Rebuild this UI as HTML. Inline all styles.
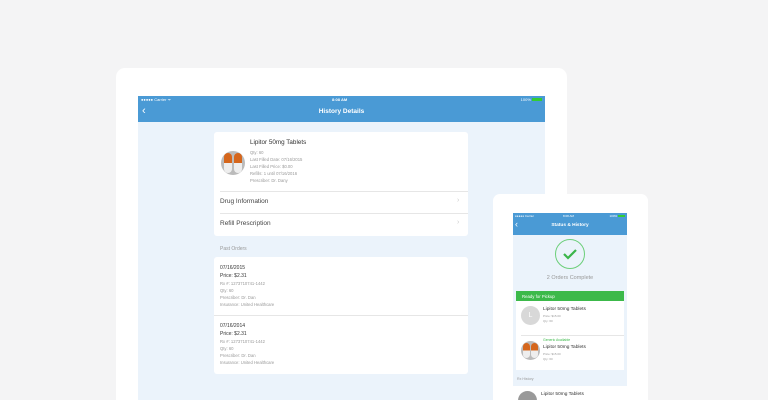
<!DOCTYPE html><html style="width:768px;height:400px;overflow:hidden"><head><style>
*{margin:0;padding:0;box-sizing:border-box}
body{width:768px;height:400px;background:#f4f4f5;position:relative;overflow:hidden;font-family:"Liberation Sans",sans-serif;color:#333}
.a{position:absolute}
.g{color:#999}
.pill{position:absolute;border-radius:50%;overflow:hidden;background:#bbb}
.pill i{position:absolute;top:8%;width:34%;height:84%;border-radius:5px;background:linear-gradient(#d5661c 50%,#eee 50%)}
</style></head><body>
<div class="a" style="left:116px;top:68px;width:451px;height:332px;background:#fff;border-radius:9px 9px 0 0"></div>
<div class="a" style="left:138px;top:96px;width:407px;height:304px;background:#ebf3fb"></div>
<div class="a" style="left:138px;top:96px;width:407px;height:26px;background:#4a9ad5;color:#fff">
 <div class="a" style="left:3px;top:1px;font-size:4px">●●●●● Carrier ᯤ</div>
 <div class="a" style="left:194px;top:1px;font-size:4px;font-weight:bold">8:08 AM</div>
 <div class="a" style="right:3px;top:1px;font-size:4px">100% <span style="display:inline-block;width:10px;height:3px;background:#3c3"></span></div>
 <div class="a" style="left:4px;top:9px;font-size:11px">‹</div>
 <div class="a" style="left:0;width:407px;top:12px;text-align:center;font-size:6.5px;font-weight:bold">History Details</div>
</div>
<div class="a" style="left:214px;top:132px;width:254px;height:104px;background:#fff;border-radius:3px">
 <div class="pill" style="left:7px;top:19px;width:24px;height:24px"><i style="left:12%"></i><i style="left:54%"></i></div>
 <div class="a" style="left:36px;top:7px;font-size:6.3px">Lipitor 50mg Tablets</div>
 <div class="a g" style="left:36px;top:17px;font-size:4.2px;line-height:7px">Qty: 60<br>Last Filled Date: 07/16/2015<br>Last Filled Price: $0.00<br>Refills: 1 until 07/16/2016<br>Prescriber: Dr. Dany</div>
 <div class="a" style="left:6px;top:59px;width:248px;border-top:1px solid #e6e6e6"></div>
 <div class="a" style="left:6px;top:66px;font-size:6.5px;color:#444">Drug Information</div>
 <div class="a g" style="left:243px;top:65px;font-size:7px;color:#ccc">›</div>
 <div class="a" style="left:6px;top:81px;width:248px;border-top:1px solid #e6e6e6"></div>
 <div class="a" style="left:6px;top:88px;font-size:6.5px;color:#444">Refill Prescription</div>
 <div class="a g" style="left:243px;top:87px;font-size:7px;color:#ccc">›</div>
</div>
<div class="a g" style="left:220px;top:246px;font-size:5px">Past Orders</div>
<div class="a" style="left:214px;top:257px;width:254px;height:117px;background:#fff;border-radius:3px">
 <div class="a" style="left:6px;top:7px;font-size:5px;line-height:8px">07/16/2015<br>Price: $2.31</div>
 <div class="a g" style="left:6px;top:23px;font-size:4.2px;line-height:7px">Rx #: 1273710741-1442<br>Qty: 60<br>Prescriber: Dr. Dan<br>Insurance: United Healthcare</div>
 <div class="a" style="left:0;top:58px;width:254px;border-top:1px solid #e6e6e6"></div>
 <div class="a" style="left:6px;top:65px;font-size:5px;line-height:8px">07/16/2014<br>Price: $2.31</div>
 <div class="a g" style="left:6px;top:81px;font-size:4.2px;line-height:7px">Rx #: 1273710741-1442<br>Qty: 60<br>Prescriber: Dr. Dan<br>Insurance: United Healthcare</div>
</div>
<div class="a" style="left:493px;top:194px;width:155px;height:206px;background:#fff;border-radius:7px 7px 0 0"></div>
<div class="a" style="left:513px;top:213px;width:114px;height:187px;background:#ebf3fb"></div>
<div class="a" style="left:513px;top:213px;width:114px;height:22px;background:#4a9ad5;color:#fff">
 <div class="a" style="left:2px;top:1px;font-size:3px">●●●●● Carrier</div>
 <div class="a" style="left:50px;top:1px;font-size:3px">8:08 AM</div>
 <div class="a" style="right:2px;top:1px;font-size:3px">100% <span style="display:inline-block;width:7px;height:2px;background:#3c3"></span></div>
 <div class="a" style="left:2px;top:6px;font-size:9px">‹</div>
 <div class="a" style="left:0;width:114px;top:10px;text-align:center;font-size:4.8px;font-weight:bold">Status &amp; History</div>
</div>
<div class="a" style="left:555px;top:239px;width:30px;height:30px;border:1.2px solid #6ccf7a;border-radius:50%"></div>
<svg class="a" style="left:562px;top:248px" width="16" height="12"><path d="M2 6 L6 10 L14 2" stroke="#3bb54a" stroke-width="2.2" fill="none"/></svg>
<div class="a g" style="left:513px;width:114px;top:275px;text-align:center;font-size:5.5px">2 Orders Complete</div>
<div class="a" style="left:516px;top:291px;width:108px;height:10px;background:#3cb94a;color:#fff;font-size:4.3px;padding:2.5px 6px">Ready for Pickup</div>
<div class="a" style="left:516px;top:301px;width:108px;height:69px;background:#fff">
 <div class="a" style="left:5px;top:5px;width:19px;height:19px;border-radius:50%;background:#d8d8d8;color:#fff;font-size:7px;text-align:center;line-height:19px">L</div>
 <div class="a" style="left:27px;top:6px;font-size:4.8px">Lipitor 50mg Tablets</div>
 <div class="a g" style="left:27px;top:13px;font-size:3px;line-height:5px">Price: $15.00<br>Qty: 60</div>
 <div class="a" style="left:5px;top:34px;width:103px;border-top:1px solid #e6e6e6"></div>
 <div class="a" style="left:27px;top:37px;font-size:3.5px;color:#3cb94a">Generic Available</div>
 <div class="a" style="left:27px;top:44px;font-size:4.8px">Lipitor 50mg Tablets</div>
 <div class="a g" style="left:27px;top:51px;font-size:3px;line-height:5px">Price: $15.00<br>Qty: 60</div>
 <div class="pill" style="left:5px;top:40px;width:19px;height:19px"><i style="left:12%"></i><i style="left:54%"></i></div>
</div>
<div class="a g" style="left:517px;top:377px;font-size:3.6px">Rx History</div>
<div class="a" style="left:513px;top:386px;width:114px;height:14px;background:#fff"></div>
<div class="a" style="left:518px;top:391px;width:19px;height:19px;border-radius:50%;background:#999"></div>
<div class="a" style="left:541px;top:392px;font-size:4.8px">Lipitor 50mg Tablets</div>
</body></html>
